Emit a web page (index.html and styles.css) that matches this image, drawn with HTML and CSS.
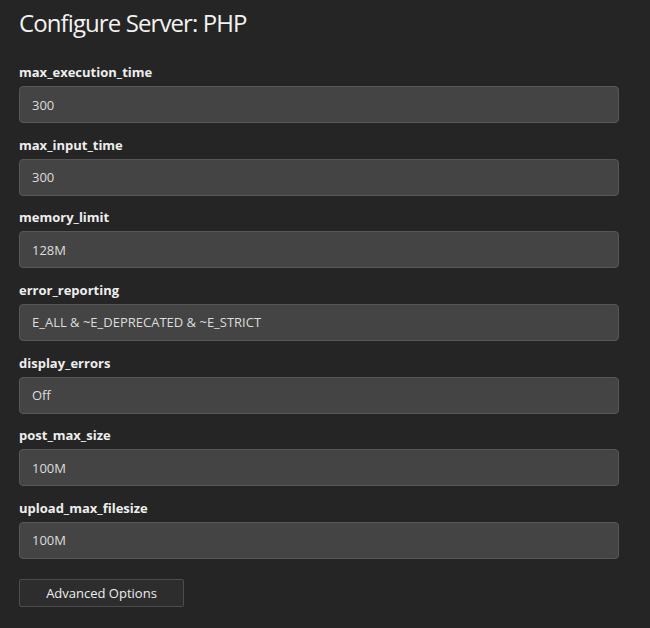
FILE: index.html
```html
<!DOCTYPE html>
<html>
<head>
<meta charset="utf-8">
<link rel="stylesheet" href="styles.css">
</head>
<body>
<div class="page">
  <h1 class="title">Configure Server: PHP</h1>
  <div class="field">
    <label class="label">max_execution_time</label>
    <input class="input" type="text" value="300">
  </div>
  <div class="field">
    <label class="label">max_input_time</label>
    <input class="input" type="text" value="300">
  </div>
  <div class="field">
    <label class="label">memory_limit</label>
    <input class="input" type="text" value="128M">
  </div>
  <div class="field">
    <label class="label">error_reporting</label>
    <input class="input" type="text" value="E_ALL &amp; ~E_DEPRECATED &amp; ~E_STRICT">
  </div>
  <div class="field">
    <label class="label">display_errors</label>
    <input class="input" type="text" value="Off">
  </div>
  <div class="field">
    <label class="label">post_max_size</label>
    <input class="input" type="text" value="100M">
  </div>
  <div class="field">
    <label class="label">upload_max_filesize</label>
    <input class="input" type="text" value="100M">
  </div>
  <button class="btn" type="button">Advanced Options</button>
</div>
</body>
</html>
```
FILE: styles.css
```css
html, body {
  margin: 0;
  padding: 0;
  background: #252525;
  font-family: "Open Sans", "DejaVu Sans", sans-serif;
  color: #eeeeee;
}
.page {
  width: 600px;
  padding: 8px 19px 0 19px;
  display: flex;
  flex-direction: column;
}
.title {
  margin: 0 0 25px 0;
  font-size: 24px;
  font-weight: 500;
  line-height: 30px;
  letter-spacing: -0.9px;
  color: #f2f2f2;
}
.field {
  display: flex;
  flex-direction: column;
  margin-bottom: 12.67px;
}
.label {
  font-size: 13px;
  font-weight: 700;
  line-height: 18px;
  margin-bottom: 5px;
  color: #eeeeee;
}
.input {
  box-sizing: border-box;
  height: 37px;
  width: 100%;
  margin: 0;
  padding: 0 12px;
  background: #444444;
  border: 1px solid #575757;
  border-radius: 4px;
  color: #dddddd;
  font-family: inherit;
  font-size: 13px;
  outline: none;
}
.btn {
  align-self: flex-start;
  margin-top: 7.33px;
  box-sizing: border-box;
  width: 165px;
  height: 28px;
  background: #2d2d2d;
  border: 1px solid #4d4d4d;
  border-radius: 2px;
  color: #eeeeee;
  font-family: inherit;
  font-size: 13px;
  padding: 0;
}
```
